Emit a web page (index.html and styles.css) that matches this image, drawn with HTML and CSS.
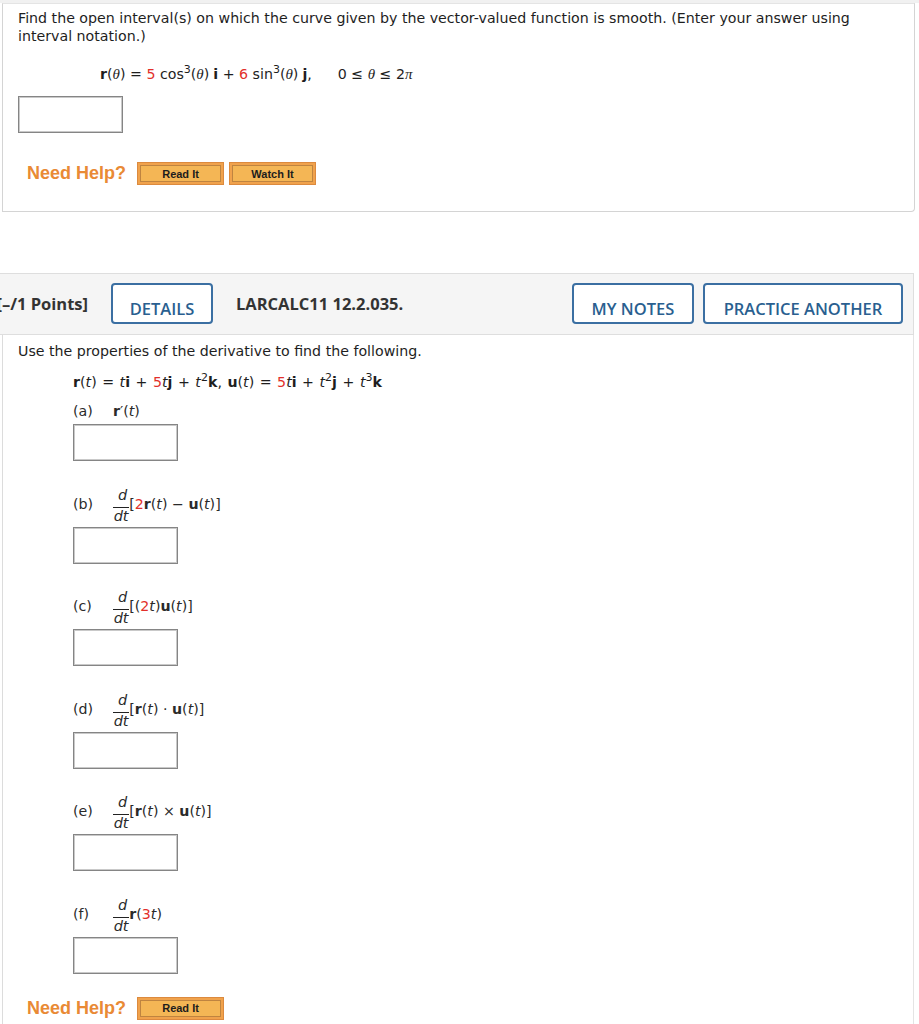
FILE: index.html
```html
<!DOCTYPE html>
<html>
<head>
<meta charset="utf-8">
<title>Vector-valued functions</title>
<link rel="stylesheet" href="styles.css">
</head>
<body>
<div class="strip"></div>
<section class="card first">
  <p class="prompt">Find the open interval(s) on which the curve given by the vector-valued function is smooth. (Enter your answer using<br>interval notation.)</p>
  <div class="eq eq-top"><b>r</b>(<i class="th">θ</i>) = <span class="red">5</span> cos<span class="sup">3</span>(<i class="th">θ</i>)<b class="vi">i</b> + <span class="red">6</span> sin<span class="sup">3</span>(<i class="th">θ</i>)<b class="vi">j</b>,<span class="sp"></span>0 ≤ <i class="th">θ</i> ≤ 2<i class="th">π</i></div>
  <div class="box"></div>
  <div class="help">
    <span class="need">Need Help?</span>
    <button class="rbtn">Read It</button>
    <button class="rbtn">Watch It</button>
  </div>
</section>

<section class="q2">
  <header class="qhead">
    <span class="pts"><span class="pts-t">[–/1 Points]</span></span>
    <button class="obtn b-details">DETAILS</button>
    <span class="code">LARCALC11 12.2.035.</span>
    <span class="grow"></span>
    <button class="obtn b-notes">MY NOTES</button>
    <button class="obtn b-practice">PRACTICE ANOTHER</button>
  </header>
  <div class="qbody">
    <p class="prompt">Use the properties of the derivative to find the following.</p>
    <div class="eq eq-main"><b>r</b>(<i>t</i>) = <i>t</i><b>i</b> + <span class="red">5</span><i>t</i><b>j</b> + <i>t</i><span class="sup">2</span><b>k</b>, <b>u</b>(<i>t</i>) = <span class="red">5</span><i>t</i><b>i</b> + <i>t</i><span class="sup">2</span><b>j</b> + <i>t</i><span class="sup">3</span><b>k</b></div>
    <div class="parts">
      <div class="part pa">
        <div class="prow"><span class="lbl">(a)</span><span class="expr"><b>r</b>′(<i>t</i>)</span></div>
        <div class="box"></div>
      </div>
      <div class="part pf">
        <div class="prow"><span class="lbl">(b)</span><span class="expr"><span class="frac"><span class="num">d</span><span class="den">dt</span></span>[<span class="red">2</span><b>r</b>(<i>t</i>) − <b>u</b>(<i>t</i>)]</span></div>
        <div class="box"></div>
      </div>
      <div class="part pf">
        <div class="prow"><span class="lbl">(c)</span><span class="expr"><span class="frac"><span class="num">d</span><span class="den">dt</span></span>[(<span class="red">2</span><i>t</i>)<b>u</b>(<i>t</i>)]</span></div>
        <div class="box"></div>
      </div>
      <div class="part pf">
        <div class="prow"><span class="lbl">(d)</span><span class="expr"><span class="frac"><span class="num">d</span><span class="den">dt</span></span>[<b>r</b>(<i>t</i>) · <b>u</b>(<i>t</i>)]</span></div>
        <div class="box"></div>
      </div>
      <div class="part pf">
        <div class="prow"><span class="lbl">(e)</span><span class="expr"><span class="frac"><span class="num">d</span><span class="den">dt</span></span>[<b>r</b>(<i>t</i>) × <b>u</b>(<i>t</i>)]</span></div>
        <div class="box"></div>
      </div>
      <div class="part pf">
        <div class="prow"><span class="lbl">(f)</span><span class="expr"><span class="frac"><span class="num">d</span><span class="den">dt</span></span><b>r</b>(<span class="red">3</span><i>t</i>)</span></div>
        <div class="box"></div>
      </div>
    </div>
    <div class="help help2">
      <span class="need">Need Help?</span>
      <button class="rbtn">Read It</button>
    </div>
  </div>
</section>
</body>
</html>
```

FILE: styles.css
```css
html, body {
  margin: 0;
  padding: 0;
  background: #ffffff;
}
body {
  font-family: "DejaVu Sans", Verdana, sans-serif;
  font-size: 14.2px;
  color: #1e1e1e;
  overflow: hidden;
}
.strip {
  height: 3px;
  background: #f1f1f1;
}
.card.first {
  margin-left: 2px;
  width: 896px;
  border: 1px solid #d4d4d4;
  border-top-color: #e4e4e4;
  border-radius: 0 0 4px 0;
  padding: 5px 0 26px 15px;
}
.prompt {
  margin: 0;
  line-height: 18px;
}
.eq {
  line-height: 18px;
  white-space: nowrap;
}
.eq b { font-weight: bold; }
.eq i, .expr i { font-style: italic; }
.th {
  font-family: "Liberation Serif", "Times New Roman", serif;
  font-size: 15px;
}
.vi { margin-left: 4px; }
.red { color: #e2302a; }
.sup {
  font-size: 11px;
  vertical-align: 6px;
  line-height: 0;
}
.sp {
  display: inline-block;
  width: 26px;
}
.eq-top {
  margin: 20px 0 0 82px;
}
.box {
  width: 105px;
  height: 37px;
  box-sizing: border-box;
  border: 1px solid #858585;
  box-shadow: inset 0 0 0 1px #c9c9c9;
  background: #fff;
}
.first .box {
  margin-top: 13px;
}
.help {
  display: flex;
  align-items: center;
  margin-top: 29px;
}
.need {
  font-family: "Liberation Sans", Arial, sans-serif;
  font-weight: bold;
  font-size: 18px;
  color: #e98a35;
  margin-left: 9px;
  margin-right: 11px;
  line-height: 23px;
}
.rbtn {
  width: 87px;
  height: 23px;
  box-sizing: border-box;
  margin: 0 5px 0 0;
  padding: 0;
  font-family: "Liberation Sans", Arial, sans-serif;
  font-weight: bold;
  font-size: 11px;
  color: #1d1d1d;
  background: #f4b655;
  border: 1px solid #dc8a3e;
  box-shadow: inset 0 0 0 2px #f0a24c, inset 0 0 0 3px #bf8440;
  line-height: 20px;
  text-align: center;
}

.q2 {
  margin: 61px 0 0 2px;
  width: 912px;
}
.qhead {
  display: flex;
  align-items: center;
  margin-left: -12px;
  height: 41px;
  padding: 9px 10px 10px 0;
  background: #f5f5f5;
  border-top: 1px solid #dedede;
  border-bottom: 1px solid #dedede;
  border-right: 1px solid #dedede;
  font-family: "Open Sans", "Noto Sans", sans-serif;
}
.pts {
  display: flex;
  justify-content: flex-end;
  width: 98px;
  flex: none;
  margin-right: 23px;
}
.pts-t {
  flex: none;
  white-space: nowrap;
  font-weight: bold;
  font-size: 16.5px;
  color: #333;
}
.code {
  font-weight: bold;
  font-size: 16.5px;
  color: #333;
  margin-left: 23px;
}
.grow { flex: 1; }
.obtn {
  flex: none;
  height: 41px;
  box-sizing: border-box;
  margin: 0;
  padding: 11px 0 0;
  font-family: "Open Sans", "Noto Sans", sans-serif;
  font-weight: 600;
  font-size: 16.5px;
  line-height: 22px;
  color: #2a5f90;
  background: #fff;
  border: 2px solid #3b6fa2;
  border-radius: 4px;
  text-align: center;
}
.b-details { width: 102px; }
.b-notes { width: 122px; margin-right: 9px; }
.b-practice { width: 200px; }

.qbody {
  border-left: 1px solid #dcdcdc;
  border-right: 1px solid #e4e4e4;
  padding: 7px 0 30px 15px;
}
.eq-main {
  margin: 13px 0 0 55px;
  word-spacing: 1px;
}
.parts {
  margin-left: 55px;
}
.part.pa {
  margin-top: 11px;
}
.part.pf {
  margin-top: 21.6px;
}
.prow {
  line-height: 18px;
  white-space: nowrap;
  color: #2a2a2a;
}
.lbl {
  display: inline-block;
  width: 40px;
}
.part .box {
  margin-top: 4px;
}
.part.pf .box {
  margin-top: 2px;
}
.frac {
  display: inline-block;
  vertical-align: -12px;
  text-align: center;
  font-style: italic;
  font-size: 14.5px;
}
.frac .num {
  display: block;
  line-height: 24px;
  padding: 0 2px 0 5px;
  border-bottom: 1px solid #222;
}
.frac .den {
  display: block;
  line-height: 17px;
}
.help2 {
  margin-top: 23px;
}
```
